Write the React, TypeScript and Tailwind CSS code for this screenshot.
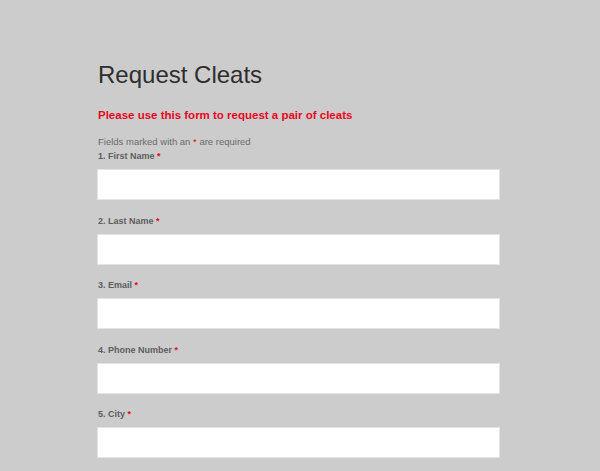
const fields = ['First Name', 'Last Name', 'Email', 'Phone Number', 'City']

function Req() {
  return <span className="text-[#e8061e]">*</span>
}

export default function App() {
  return (
    <main className="min-h-[471px] w-full overflow-hidden bg-[#cccccc] font-['Liberation_Sans',Arial,sans-serif]">
      <div className="ml-[97px] w-[403px] pt-[60px]">
        <h1 className="pl-px text-[24px] leading-[30px] font-normal text-[#2e2e2e]">Request Cleats</h1>
        <p className="mt-[17.3px] pl-px text-[11.5px] leading-[16px] font-bold text-[#e8061e]">
          Please use this form to request a pair of cleats
        </p>
        <p className="mt-[12.2px] pl-px text-[9.5px] leading-[14px] text-[#6b6b6b]">
          Fields marked with an <Req /> are required
        </p>
        <form className="mt-[0.7px]">
          {fields.map((f, i) => (
            <div key={f} className="mb-[14.4px]">
              <label className="block pl-px text-[9px] leading-[12px] font-bold text-[#5e5e5e]">
                {i + 1}. {f} <Req />
              </label>
              <input
                type="text"
                className="mt-[7.1px] block h-[31px] w-full border border-[#e4e4e4] bg-white outline-none"
              />
            </div>
          ))}
        </form>
      </div>
    </main>
  )
}
